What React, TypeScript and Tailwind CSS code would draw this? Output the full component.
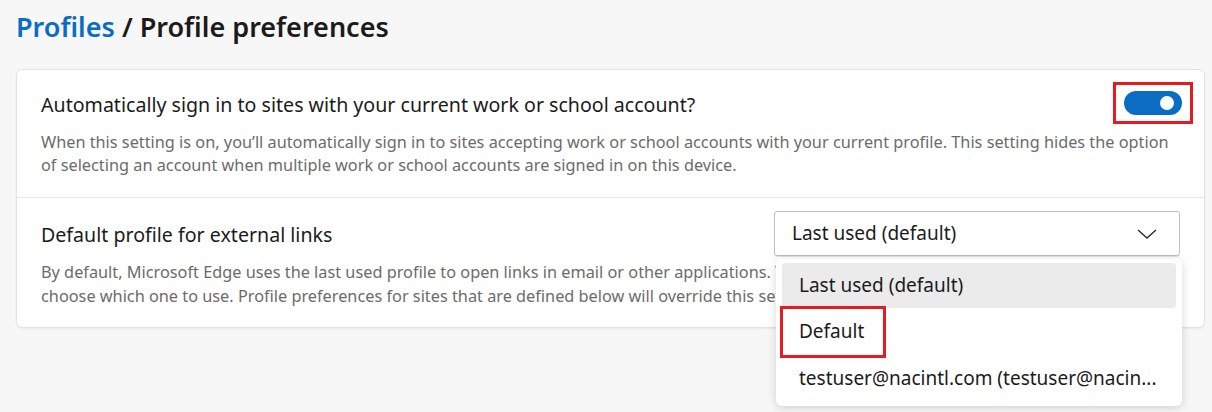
import React from 'react';

const font = { fontFamily: '"Segoe UI", "Noto Sans", "Open Sans", sans-serif' };

const Toggle: React.FC = () => (
  <div className="relative shrink-0 border-[3px] border-[#e41b23] px-[8px] py-[6px]">
    <div className="flex h-[24px] w-[58px] items-center justify-end rounded-full bg-[#0b6cc4] pr-[8px]">
      <div className="h-[14px] w-[14px] rounded-full bg-white" />
    </div>
  </div>
);

const Chevron: React.FC = () => (
  <svg width="20" height="10" viewBox="0 0 20 10" fill="none" className="shrink-0">
    <path d="M1 1 L10 9 L19 1" stroke="#2b2b2b" strokeWidth="1.4" strokeLinejoin="miter" />
  </svg>
);

const options = ['Last used (default)', 'Default', 'testuser@nacintl.com (testuser@nacin...'];

export default function App() {
  return (
    <div className="min-h-[412px] w-full bg-[#f7f7f7] px-4 pt-[9px]" style={font}>
      <h1 className="text-[27px] font-semibold leading-[36px] text-[#1b1b1b]">
        <span className="text-[#0b6cc4]">Profiles</span> / Profile preferences
      </h1>

      <div className="mt-[24px] w-[1189px] rounded-[6px] border border-[#e3e3e3] bg-white shadow-[0_1px_2px_rgba(0,0,0,0.06)]">
        {/* auto sign-in row */}
        <div className="border-b border-[#e6e6e6] px-6 pb-[20px] pt-[12px]">
          <div className="flex items-center justify-between">
            <div className="pt-[3px] text-[19.6px] leading-[26px] text-[#1b1b1b]">
              Automatically sign in to sites with your current work or school account?
            </div>
            <div className="-mr-[13px]">
              <Toggle />
            </div>
          </div>
          <p className="mt-[7px] text-[16.3px] leading-[23px] text-[#6b6b6b]">
            When this setting is on, you’ll automatically sign in to sites accepting work or school accounts with your current profile. This setting hides the option of selecting an account when multiple work or school accounts are signed in on this device.
          </p>
        </div>

        {/* external links row */}
        <div className="relative px-6 pb-[19px] pt-[13px]">
          <div className="flex items-center justify-between">
            <div className="pt-[2px] text-[19.6px] leading-[26px] text-[#1b1b1b]">Default profile for external links</div>
            <div className="flex h-[45px] w-[406px] items-center justify-between rounded-[3px] border border-[#bdbdbd] pl-[17px] pr-[22px] shadow-[0_1px_0_rgba(0,0,0,0.12)]">
              <span className="text-[19px] text-[#1b1b1b]">Last used (default)</span>
              <Chevron />
            </div>
          </div>
          <p className="mt-[4px] max-w-[820px] text-[16.3px] leading-[24px] text-[#6b6b6b]">
            By default, Microsoft Edge uses the last used profile to open links in email or other applications. You can choose which one to use. Profile preferences for sites that are defined below will override this setting.
          </p>

          {/* open dropdown */}
          <div className="absolute left-[759px] top-[61px] z-10 w-[406px] rounded-[6px] bg-white px-[6px] py-[4px] shadow-[0_2px_10px_rgba(0,0,0,0.16)]">
            {options.map((o, i) => (
              <div
                key={o}
                className={`flex items-center rounded-[4px] pl-[17px] text-[19px] text-[#1b1b1b] ${i === 0 ? 'h-[45px] bg-[#ebebeb]' : 'h-[47px]'}`}
              >
                {o}
              </div>
            ))}
            <div className="absolute left-[4px] top-[47px] h-[52px] w-[106px] border-[3px] border-[#e41b23]" />
          </div>
        </div>
      </div>
    </div>
  );
}
